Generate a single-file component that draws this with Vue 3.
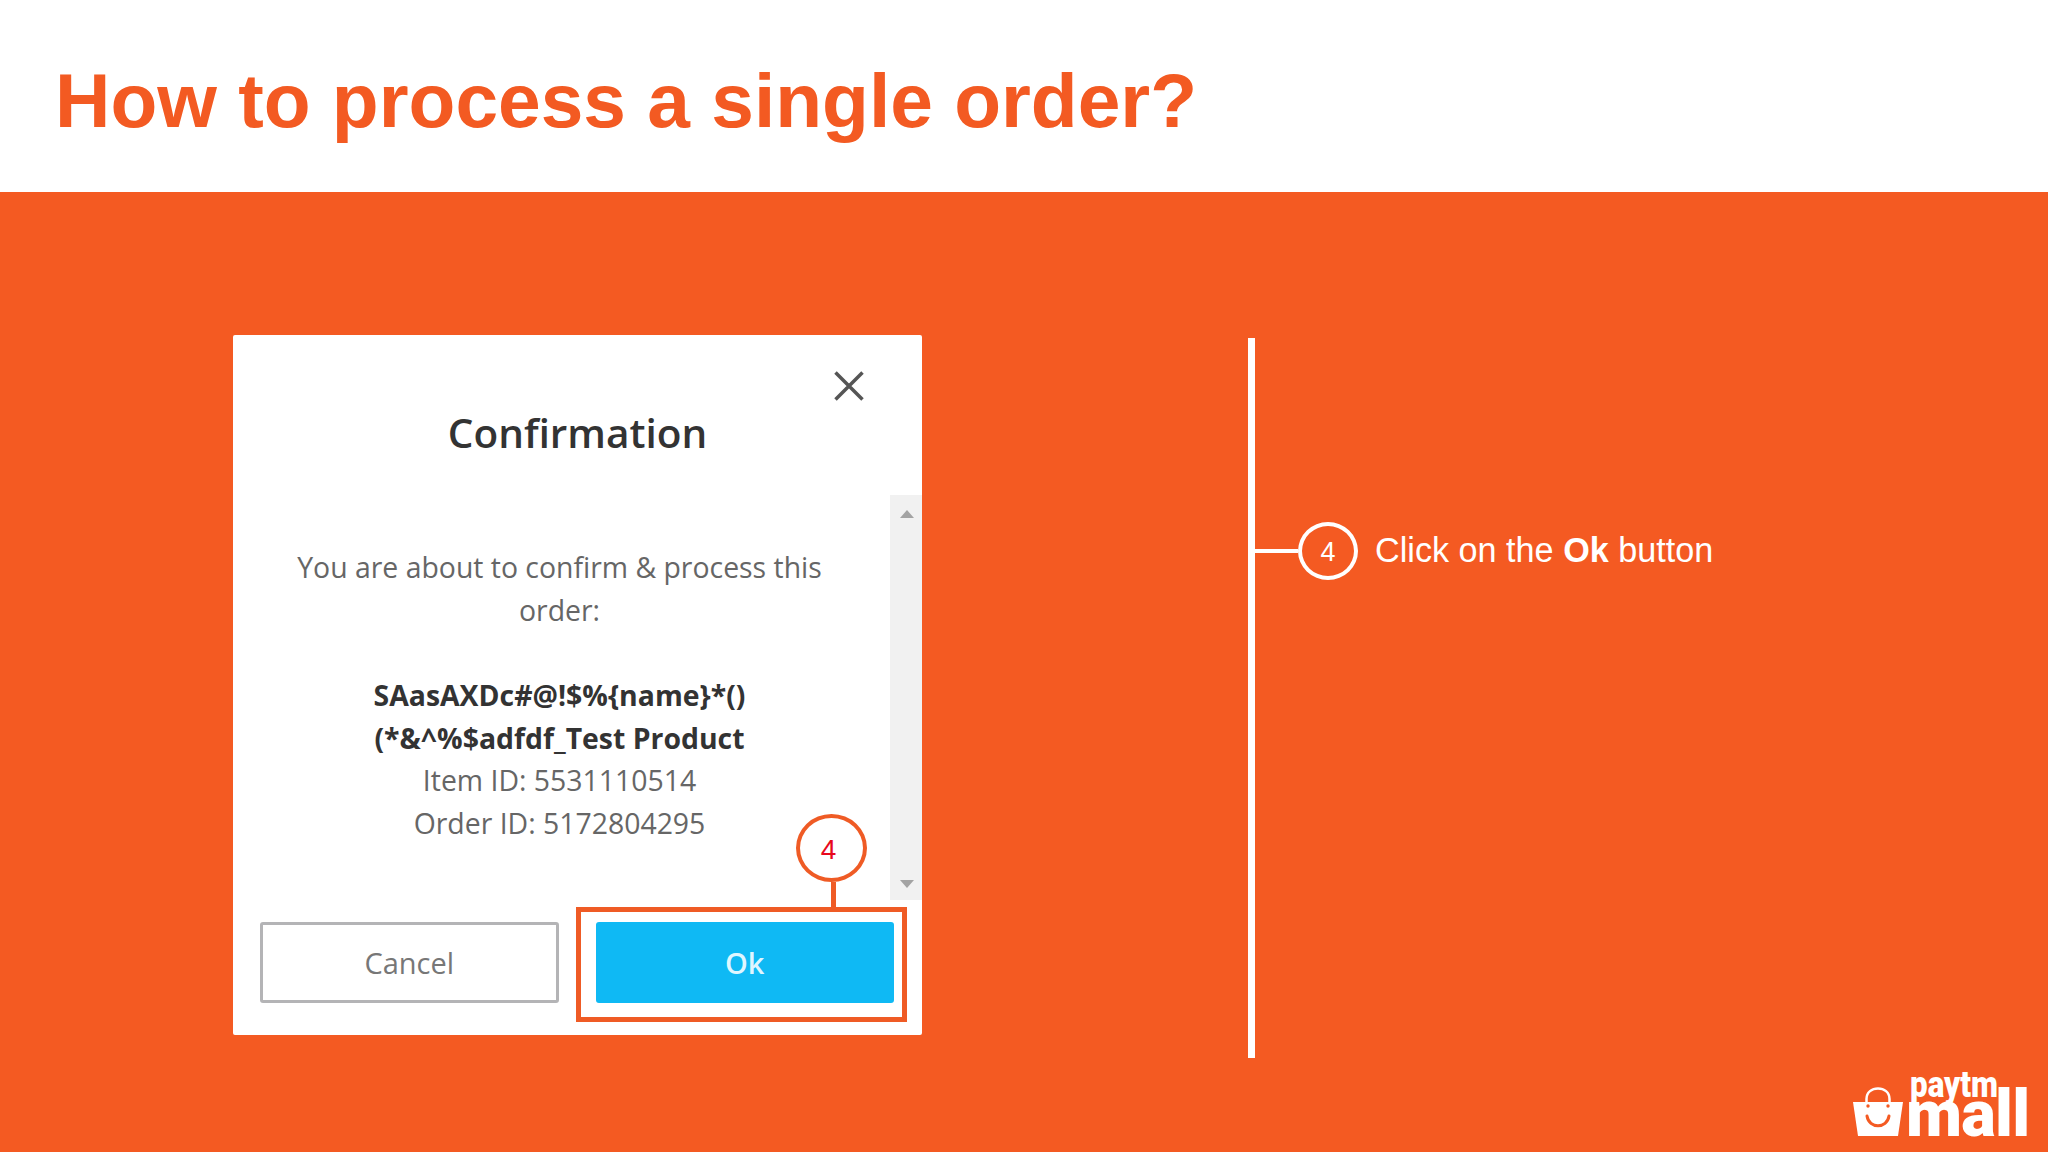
<template>
<div class="slide">
  <header class="slide-head">
    <h1>How to process a single order?</h1>
  </header>
  <main class="slide-body">
    <section class="dialog">
      <svg class="close" viewBox="0 0 30 30"><path d="M1.5 1.5 28.5 28.5M28.5 1.5 1.5 28.5"/></svg>
      <h2>Confirmation</h2>
      <div class="dialog-content">
        <div class="message">
          <p>You are about to confirm &amp; process this order:</p>
          <p class="product">SAasAXDc#@!$%{name}*()<br>(*&amp;^%$adfdf_Test Product</p>
          <p>Item ID: 5531110514<br>Order ID: 5172804295</p>
        </div>
        <div class="scrollbar">
          <i class="arrow up"></i>
          <i class="arrow down"></i>
        </div>
      </div>
      <div class="dialog-actions">
        <button class="btn cancel">Cancel</button>
        <button class="btn ok">Ok</button>
      </div>
      <div class="highlight">
        <span class="stem"></span>
        <span class="marker">4</span>
      </div>
    </section>

    <section class="steps">
      <div class="step">
        <span class="tick"></span>
        <span class="step-num">4</span>
        <span class="step-text">Click on the <b>Ok</b> button</span>
      </div>
    </section>

    <div class="logo">
      <svg class="bag" viewBox="0 0 50 49">
        <path class="handle" d="M13.500 16V12C13.500 5 19 1.500 25 1.500C31 1.500 36.500 5 36.500 12V16"/>
        <path class="body" d="M0 15H50L45 49H5Z"/>
        <circle class="cut" cx="15" cy="19" r="1.700"/>
        <circle class="cut" cx="35" cy="19" r="1.700"/>
        <path class="smile" d="M14 29C16 42 34 42 36 29"/>
      </svg>
      <div class="wordmark">
        <span class="paytm">paytm</span>
        <span class="mall">mall</span>
      </div>
    </div>
  </main>
</div>
</template>

<script setup>
</script>

<style>
html, body {
  margin: 0;
  background: #fff;
}
</style>

<style scoped>
.slide {
  width: 2048px;
  height: 1152px;
  display: flex;
  flex-direction: column;
  overflow: hidden;
  font-family: "Liberation Sans", Arial, sans-serif;
}

.slide-head {
  height: 192px;
  box-sizing: border-box;
  padding: 55px 0 0 55px;
  background: #fff;
}

.slide-head h1 {
  margin: 0;
  font-size: 76.700px;
  line-height: 92px;
  font-weight: 700;
  color: #f35a22;
}

.slide-body {
  flex: 1;
  display: flex;
  background: #f45a22;
  padding-top: 143px;
  box-sizing: border-box;
}

/* dialog */
.dialog {
  position: relative;
  width: 689px;
  height: 700px;
  margin-left: 233px;
  display: flex;
  flex-direction: column;
  background: #fff;
  border-radius: 2px;
  font-family: "Open Sans", sans-serif;
}

.close {
  position: absolute;
  top: 36px;
  right: 58px;
  width: 30px;
  height: 30px;
}

.close path {
  fill: none;
  stroke: #555;
  stroke-width: 3.500;
}

.dialog h2 {
  height: 160px;
  margin: 0;
  padding-top: 73px;
  box-sizing: border-box;
  text-align: center;
  font-size: 40.500px;
  line-height: 50px;
  font-weight: 600;
  color: #333;
}

.dialog-content {
  height: 405px;
  display: flex;
}

.message {
  flex: 1;
  padding: 51px 52px 0 48px;
  text-align: center;
  font-size: 28.400px;
  line-height: 42.600px;
  color: #666;
}

.message p {
  margin: 0 0 43px;
}

.product {
  font-weight: 700;
  color: #333;
}

.message .product {
  margin-bottom: 0;
}

.scrollbar {
  width: 32px;
  display: flex;
  flex-direction: column;
  justify-content: space-between;
  align-items: center;
  padding: 15px 0 12px 2px;
  box-sizing: border-box;
  background: #f1f1f1;
}

.arrow {
  width: 0;
  height: 0;
  border-left: 7px solid transparent;
  border-right: 7px solid transparent;
}

.arrow.up {
  border-bottom: 8px solid #a3a3a3;
}

.arrow.down {
  border-top: 8px solid #a3a3a3;
}

.dialog-actions {
  display: flex;
  gap: 37px;
  padding: 22px 28px 0 27px;
}

.btn {
  flex: 1;
  height: 81px;
  border-radius: 3px;
  box-sizing: border-box;
  font-family: inherit;
  font-size: 29px;
  font-weight: 600;
  padding: 0;
}

.cancel {
  background: #fff;
  border: 3px solid #b4b4b6;
  color: #777;
  font-weight: 400;
}

.ok {
  background: #0fb9f4;
  border: 3px solid #0fb9f4;
  color: #dff6ff;
}

/* red outline + numbered marker over the Ok button */
.highlight {
  position: absolute;
  left: 343px;
  top: 572px;
  width: 331px;
  height: 115px;
  box-sizing: border-box;
  border: 5px solid #ef5b25;
}

.stem {
  position: absolute;
  left: 250px;
  top: -30px;
  width: 5px;
  height: 26px;
  background: #ef5b25;
}

.marker {
  position: absolute;
  left: 215px;
  top: -98px;
  width: 71px;
  height: 68px;
  box-sizing: border-box;
  border: 4px solid #ef5b25;
  border-radius: 50%;
  background: #fff;
  color: #e8091c;
  font: 28px/64px "Liberation Sans", Arial, sans-serif;
  text-align: center;
  padding-right: 6px;
}

/* right hand side */
.steps {
  width: 7px;
  height: 720px;
  margin: 3px 0 0 326px;
  background: #fff;
}

.step {
  height: 58px;
  margin: 184px 0 0 7px;
  display: flex;
  align-items: center;
  width: 480px;
  color: #fff;
}

.tick {
  width: 43px;
  height: 4px;
  background: #fff;
}

.step-num {
  width: 60px;
  height: 58px;
  box-sizing: border-box;
  border: 4px solid #fff;
  border-radius: 50%;
  text-align: center;
  font-size: 27px;
  line-height: 52px;
}

.step-text {
  margin-left: 17px;
  padding-bottom: 2px;
  font-size: 34.200px;
  white-space: nowrap;
}

.step-text b {
  font-weight: 700;
}

/* logo */
.logo {
  margin-left: auto;
  align-self: flex-end;
  display: flex;
  align-items: flex-end;
  gap: 5px;
  margin-right: 20px;
  margin-bottom: 16px;
  height: 59px;
}

.bag {
  width: 50px;
  height: 49px;
}

.handle {
  fill: none;
  stroke: #fff;
  stroke-width: 2.500;
}

.bag .body {
  fill: #fff;
}

.cut {
  fill: #f45a22;
}

.smile {
  fill: none;
  stroke: #f45a22;
  stroke-width: 3;
  stroke-linecap: round;
}

.wordmark {
  position: relative;
  width: 120px;
  height: 59px;
  color: #fff;
  font-family: Roboto, sans-serif;
  font-weight: 900;
}

.mall {
  position: absolute;
  left: -2px;
  bottom: -2px;
  font-size: 65px;
  line-height: 48px;
  letter-spacing: -0.700px;
}

.paytm {
  position: absolute;
  left: 2px;
  top: -7px;
  font-size: 36px;
  line-height: 30px;
  transform: scaleX(0.87);
  transform-origin: left top;
}
</style>
